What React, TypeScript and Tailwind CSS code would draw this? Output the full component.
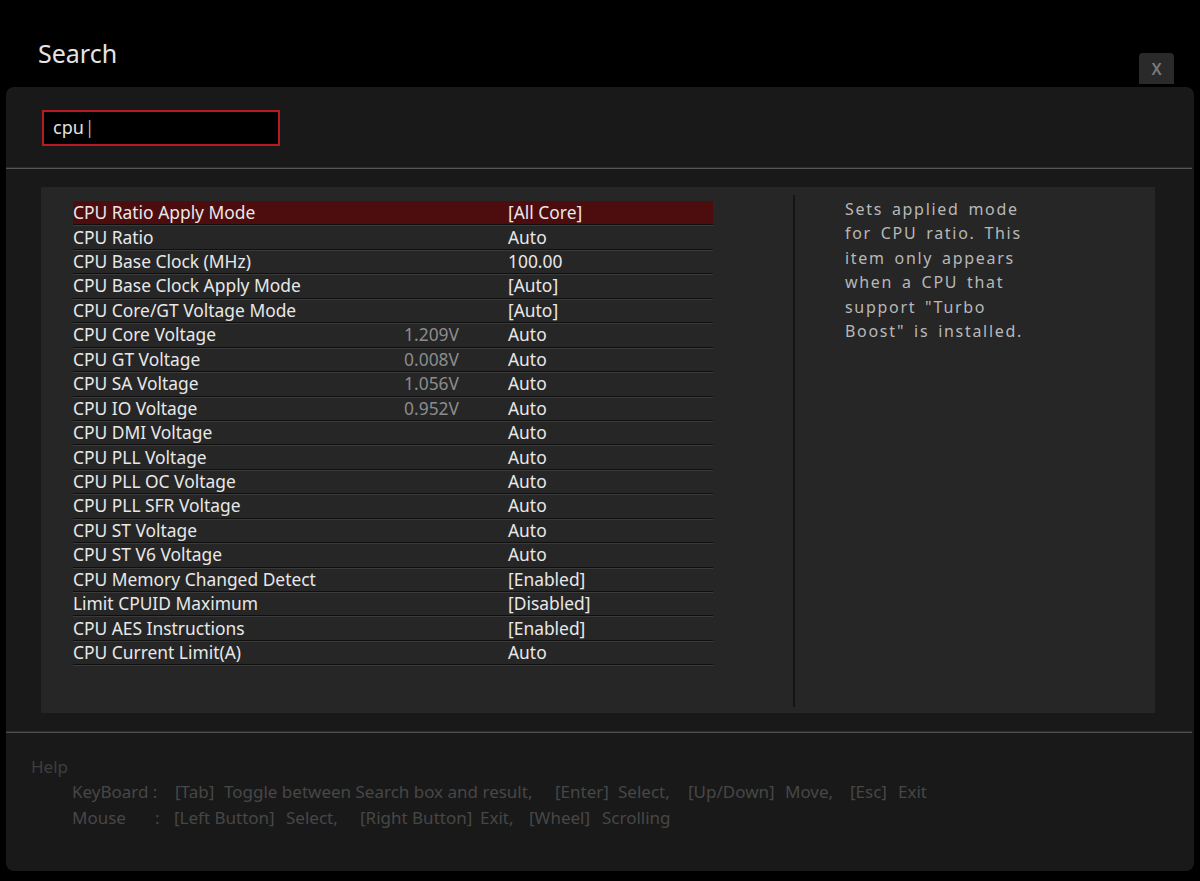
const rows = [
  { label: "CPU Ratio Apply Mode", volt: "", value: "[All Core]", active: true },
  { label: "CPU Ratio", volt: "", value: "Auto" },
  { label: "CPU Base Clock (MHz)", volt: "", value: "100.00" },
  { label: "CPU Base Clock Apply Mode", volt: "", value: "[Auto]" },
  { label: "CPU Core/GT Voltage Mode", volt: "", value: "[Auto]" },
  { label: "CPU Core Voltage", volt: "1.209V", value: "Auto" },
  { label: "CPU GT Voltage", volt: "0.008V", value: "Auto" },
  { label: "CPU SA Voltage", volt: "1.056V", value: "Auto" },
  { label: "CPU IO Voltage", volt: "0.952V", value: "Auto" },
  { label: "CPU DMI Voltage", volt: "", value: "Auto" },
  { label: "CPU PLL Voltage", volt: "", value: "Auto" },
  { label: "CPU PLL OC Voltage", volt: "", value: "Auto" },
  { label: "CPU PLL SFR Voltage", volt: "", value: "Auto" },
  { label: "CPU ST Voltage", volt: "", value: "Auto" },
  { label: "CPU ST V6 Voltage", volt: "", value: "Auto" },
  { label: "CPU Memory Changed Detect", volt: "", value: "[Enabled]" },
  { label: "Limit CPUID Maximum", volt: "", value: "[Disabled]" },
  { label: "CPU AES Instructions", volt: "", value: "[Enabled]" },
  { label: "CPU Current Limit(A)", volt: "", value: "Auto" },
];

const helpLines = [
  "Sets applied mode",
  "for CPU ratio. This",
  "item only appears",
  "when a CPU that",
  'support "Turbo',
  'Boost" is installed.',
];

// key hint segments: [text, width up to the next segment]
const keyboardHints: [string, string][] = [
  ["KeyBoard :", "w-[103px]"],
  ["[Tab]", "w-[49px]"],
  ["Toggle between Search box and result,", "w-[331px]"],
  ["[Enter]", "w-[63px]"],
  ["Select,", "w-[70px]"],
  ["[Up/Down]", "w-[97px]"],
  ["Move,", "w-[65px]"],
  ["[Esc]", "w-[48px]"],
  ["Exit", ""],
];

const mouseHints: [string, string][] = [
  ["Mouse", "w-[83px]"],
  [":", "w-[19px]"],
  ["[Left Button]", "w-[112px]"],
  ["Select,", "w-[74px]"],
  ["[Right Button]", "w-[120px]"],
  ["Exit,", "w-[49px]"],
  ["[Wheel]", "w-[73px]"],
  ["Scrolling", ""],
];

const HintLine = ({ items }: { items: [string, string][] }) => (
  <div className="flex h-[25.5px] items-center whitespace-nowrap">
    {items.map(([text, w], i) => (
      <span key={i} className={`inline-block ${w}`}>
        {text}
      </span>
    ))}
  </div>
);

export default function App() {
  return (
    <div className="h-[881px] w-full overflow-hidden bg-black font-['Noto_Sans',sans-serif]">
      {/* title bar */}
      <div className="flex h-[87px] items-stretch justify-between pl-[38px] pr-[26px]">
        <div className="pt-[35px] text-[25px] leading-[36px] text-[#e4e4e4]">Search</div>
        <div className="flex items-end pb-[3px]">
          <div className="flex h-[31px] w-[35px] items-center justify-center rounded-t-[4px] bg-[#2a2a2a] text-[16px] font-semibold text-[#7a7a7a]">
            X
          </div>
        </div>
      </div>

      {/* main panel */}
      <div className="mx-[6px] flex h-[784px] flex-col rounded-[8px] bg-[#191919]">
        <div className="pl-[36px] pt-[23px]">
          <div className="flex h-[36px] w-[238px] items-center border-2 border-[#b91a1f] bg-black pb-[2px] pl-[9px] text-[18px] text-[#e2e2e2]">
            cpu<span className="ml-px font-light">|</span>
          </div>
        </div>

        <div className="mt-[21px] h-[2px] w-[1186px] border-t border-[#2c2c2c] bg-[#565656]" />

        <div className="ml-[35px] mt-[18px] flex h-[526px] w-[1114px] bg-[#262626]">
          <div className="w-[752px] pl-[32px] pt-[14px]">
            {rows.map((r) => (
              <div
                key={r.label}
                className={`flex h-[24.44px] w-[640px] items-center border-b border-[#0f0f0f] pb-[1px] text-[17.4px] text-[#e8e8e8] shadow-[0_1px_0_0_#3a3a3a] ${
                  r.active ? "bg-[#4d0c0d]" : ""
                }`}
              >
                <span className="w-[330px] whitespace-nowrap">{r.label}</span>
                <span className="w-[56px] text-right text-[#8c8c8c]">{r.volt}</span>
                <span className="ml-[49px]">{r.value}</span>
              </div>
            ))}
          </div>
          <div className="mb-[6px] mt-[8px] w-[2px] bg-[#141414]" />
          <div className="pl-[50px] pt-[10px] text-[16px] leading-[24.4px] tracking-[1.7px] text-[#b8b8b8] [word-spacing:3px]">
            {helpLines.map((l) => (
              <div key={l} className="whitespace-nowrap">
                {l}
              </div>
            ))}
          </div>
        </div>

        <div className="mt-[18px] h-[2px] w-[1186px] border-t border-[#2c2c2c] bg-[#4e4e4e]" />

        <div className="pl-[25px] pt-[22px] text-[17px] text-[#474747]">
          <div className="h-[24px] leading-[24px] text-[#3e3e3e]">Help</div>
          <div className="pl-[41px]">
            <HintLine items={keyboardHints} />
            <HintLine items={mouseHints} />
          </div>
        </div>
      </div>
    </div>
  );
}
